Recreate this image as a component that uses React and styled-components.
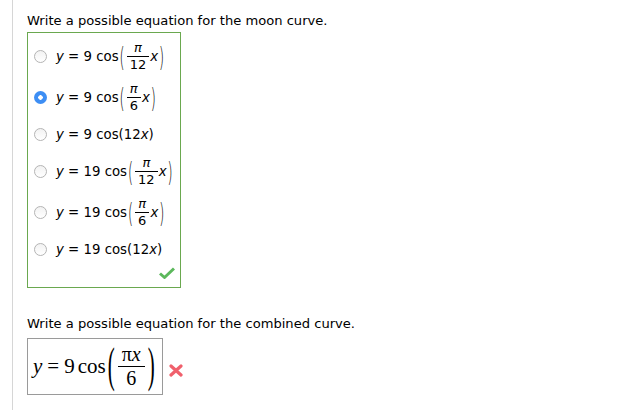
import styled, { createGlobalStyle } from "styled-components";

const GlobalStyle = createGlobalStyle`
  body {
    margin: 0;
    background: #fff;
    color: #000;
    font-family: "DejaVu Sans", Verdana, sans-serif;
  }
`;

const Page = styled.div`
  margin-left: 12px;
  border-left: 1px solid #d6d6d6;
  min-height: 410px;
  box-sizing: border-box;
  padding: 13px 0 0 14px;
`;

const Question = styled.div`
  font-size: 13.1px;
  line-height: 16px;
  margin-top: ${(p) => p.$top || 0}px;
`;

const Choices = styled.div`
  margin-top: 3px;
  width: 154px;
  height: 256px;
  box-sizing: border-box;
  border: 1px solid #6aa84f;
  padding: 6px 0 0 6px;
  display: flex;
  flex-direction: column;
  gap: 7px;
  position: relative;
`;

const Choice = styled.label`
  display: flex;
  align-items: center;
  height: ${(p) => (p.$tall ? 34 : 26)}px;
  font-size: 13.3px;
  white-space: nowrap;
`;

const Radio = styled.span`
  width: 13px;
  height: 13px;
  box-sizing: border-box;
  border-radius: 50%;
  margin-right: 9px;
  flex-shrink: 0;
  border: ${(p) => (p.$on ? "none" : "1px solid #b4b4b4")};
  background: ${(p) =>
    p.$on
      ? "radial-gradient(circle, #fff 0 2px, #3d8ef4 2.5px)"
      : "linear-gradient(#f2f2f2, #fff)"};
`;

const Var = styled.i`
  font-style: italic;
`;

const Paren = styled.span`
  display: inline-block;
  font-size: ${(p) => p.$size || 13}px;
  transform: scaleY(${(p) => p.$scale || 2.1});
  font-weight: 200;
  line-height: 1;
  margin: 0 ${(p) => p.$gap ?? 1}px;
`;

const Frac = styled.span`
  display: inline-flex;
  flex-direction: column;
  align-items: center;
  font-size: ${(p) => p.$size || 13}px;
  line-height: 1.05;
  margin: 0 1px;
`;

const Num = styled.span`
  padding: 0 ${(p) => p.$pad}px 1px;
  border-bottom: 1px solid #000;
  align-self: stretch;
  text-align: center;
`;

const Den = styled.span`
  padding: 1px 3px 0;
`;

const Check = styled.svg`
  position: absolute;
  right: 5px;
  bottom: 8px;
`;

const AnswerRow = styled.div`
  display: flex;
  align-items: center;
  margin-top: 6px;
`;

const AnswerBox = styled.div`
  width: 136px;
  height: 57px;
  box-sizing: border-box;
  border: 1px solid #9a9a9a;
  display: flex;
  align-items: center;
  padding-left: 5px;
  font-family: "Liberation Serif", "Times New Roman", serif;
  font-size: 21px;
  white-space: nowrap;
`;

const MathVar = styled.i`
  font-style: italic;
`;

const Eq = styled.span`
  margin: 0 5px 0 5px;
`;

const Cross = styled.svg`
  margin: 8px 0 0 6px;
`;

const Fn = styled.span`
  margin-left: 3px;
`;

function Fraction({ num, den, size, pad = 3 }) {
  return (
    <Frac $size={size}>
      <Num $pad={pad}>{num}</Num>
      <Den>{den}</Den>
    </Frac>
  );
}

const choices = [
  { a: "9", den: "12", frac: true },
  { a: "9", den: "6", frac: true, on: true },
  { a: "9", frac: false },
  { a: "19", den: "12", frac: true },
  { a: "19", den: "6", frac: true },
  { a: "19", frac: false },
];

export default function App() {
  return (
    <>
      <GlobalStyle />
      <Page>
        <Question>Write a possible equation for the moon curve.</Question>
        <Choices>
          {choices.map((c, i) => (
            <Choice key={i} $tall={c.frac}>
              <Radio $on={c.on} />
              <Var>y</Var>&nbsp;=&nbsp;{c.a}&nbsp;cos
              {c.frac ? (
                <>
                  <Paren>(</Paren>
                  <Fraction num={<Var>π</Var>} den={c.den} />
                  <Var>x</Var>
                  <Paren>)</Paren>
                </>
              ) : (
                <>
                  (12<Var>x</Var>)
                </>
              )}
            </Choice>
          ))}
          <Check width="16" height="12" viewBox="0 0 16 12">
            <path d="M1 6.5 L5.5 10.5 L15 1.5" fill="none" stroke="#5cb85c" strokeWidth="3" strokeLinejoin="round" />
          </Check>
        </Choices>

        <Question $top={28}>Write a possible equation for the combined curve.</Question>
        <AnswerRow>
          <AnswerBox>
            <MathVar>y</MathVar>
            <Eq>=</Eq>9<Fn>cos</Fn>
            <Paren $size={21} $scale={2.3} $gap={2}>(</Paren>
            <Fraction size={20} pad={4} num={<>π<MathVar>x</MathVar></>} den="6" />
            <Paren $size={21} $scale={2.3} $gap={2}>)</Paren>
          </AnswerBox>
          <Cross width="14" height="13" viewBox="0 0 14 13">
            <path d="M2 2 L12 11 M12 2 L2 11" stroke="#f0606c" strokeWidth="3.2" strokeLinecap="round" />
          </Cross>
        </AnswerRow>
      </Page>
    </>
  );
}
